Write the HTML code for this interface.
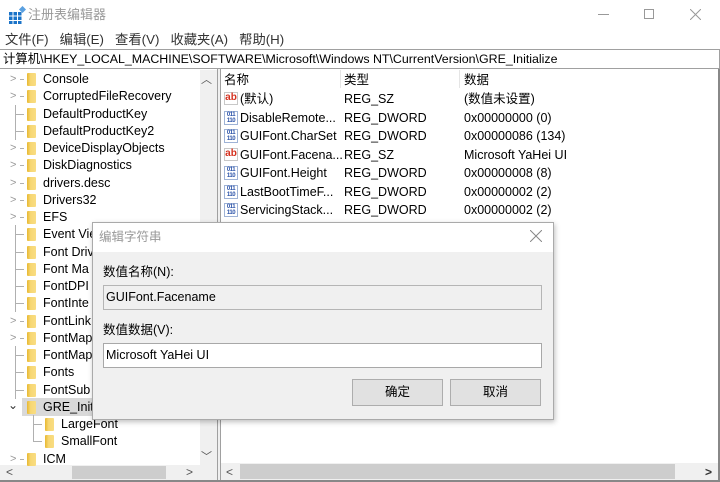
<!DOCTYPE html>
<html><head><meta charset="utf-8"><style>
*{margin:0;padding:0;box-sizing:border-box}
body{width:720px;height:482px;overflow:hidden;background:#fff;font-family:"Liberation Sans","Noto Sans CJK SC",sans-serif;font-size:12.5px;color:#000;position:relative}
.a{position:absolute;white-space:nowrap;line-height:16px}
.f{position:absolute;width:9px;height:13px;background:linear-gradient(90deg,#e8b830,#f7d774 40%,#f9dd82);border-radius:1px}
.ab{position:absolute;width:14px;height:13px;background:#fff;border:1px solid #c8c8c8;color:#d4301e;font-weight:bold;font-size:10px;line-height:10px;text-align:center}
.dw{position:absolute;width:14px;height:14px;background:#fff;border:1px solid #9fb3d6;color:#2a52a8;font-size:6px;line-height:6px;font-weight:bold;text-align:center;letter-spacing:-.5px}
.arr{position:absolute;color:#999;font-size:11px;line-height:16px}
</style></head><body>
<svg class="a" style="left:8px;top:6px" width="18" height="18"><g fill="#1a73c8"><rect x="1" y="6" width="3.5" height="3.5"/><rect x="5.5" y="6" width="3.5" height="3.5"/><rect x="10" y="6" width="3.5" height="3.5"/><rect x="1" y="10.5" width="3.5" height="3.5"/><rect x="5.5" y="10.5" width="3.5" height="3.5"/><rect x="10" y="10.5" width="3.5" height="3.5"/><rect x="1" y="15" width="3.5" height="3"/><rect x="5.5" y="15" width="3.5" height="3"/><rect x="10" y="15" width="3.5" height="3"/></g><rect x="12" y="1" width="5" height="5" fill="#5aa0e0" transform="rotate(45 14.5 3.5)"/></svg>
<div class="a" style="left:28px;top:7px;color:#999;font-size:13px">注册表编辑器</div>
<div class="a" style="left:598px;top:14px;width:11px;height:1px;background:#999"></div>
<div class="a" style="left:644px;top:9px;width:10px;height:10px;border:1px solid #999"></div>
<svg class="a" style="left:690px;top:9px" width="11" height="11"><path d="M0 0L11 11M11 0L0 11" stroke="#999" stroke-width="1"/></svg>
<div class="a" style="left:5px;top:32px;color:#333;font-size:13.3px">文件(F)&nbsp;&nbsp; 编辑(E)&nbsp;&nbsp; 查看(V)&nbsp;&nbsp; 收藏夹(A)&nbsp;&nbsp; 帮助(H)</div>
<div class="a" style="left:0;top:49px;width:720px;height:20px;border-top:1px solid #a0a0a0;border-bottom:1px solid #a0a0a0;border-right:1px solid #a0a0a0"></div>
<div class="a" style="left:3px;top:51px;font-size:12.4px">计算机\HKEY_LOCAL_MACHINE\SOFTWARE\Microsoft\Windows NT\CurrentVersion\GRE_Initialize</div>
<div class="a" style="left:217px;top:69px;width:4px;height:413px;background:#f0f0f0;border-left:1px solid #a0a0a0;border-right:1px solid #a0a0a0"></div>
<div class="a" style="left:718px;top:69px;width:2px;height:413px;background:#888"></div>
<div class="a" style="left:0;top:480px;width:720px;height:2px;background:#888"></div>
<div class="a" style="left:200px;top:70px;width:17px;height:395px;background:#f0f0f0"></div>
<div class="a" style="left:201px;top:72px;color:#555;font-size:11px">︿</div>
<div class="a" style="left:201px;top:449px;color:#555;font-size:11px">﹀</div>
<div class="a" style="left:0;top:465px;width:217px;height:15px;background:#f0f0f0"></div>
<div class="a" style="left:72px;top:466px;width:94px;height:13px;background:#cdcdcd"></div>
<div class="a" style="left:6px;top:464px;color:#555;font-size:12px">&lt;</div>
<div class="a" style="left:186px;top:464px;color:#555;font-size:12px">&gt;</div>
<div class="a" style="left:221px;top:463px;width:497px;height:17px;background:#f0f0f0"></div>
<div class="a" style="left:240px;top:464px;width:435px;height:15px;background:#cdcdcd"></div>
<div class="a" style="left:226px;top:464px;color:#555;font-size:12px">&lt;</div>
<div class="a" style="left:705px;top:464px;color:#333;font-size:12px;font-weight:bold">&gt;</div>
<div class="a" style="left:22px;top:398px;width:70px;height:18px;background:#d9d9d9"></div>
<div class="a" style="left:33px;top:415px;width:1px;height:27px;background:#b0b0b0"></div>
<div class="a" style="left:33px;top:424px;width:9px;height:1px;background:#b0b0b0"></div>
<div class="a" style="left:33px;top:441px;width:9px;height:1px;background:#b0b0b0"></div>
<div id="tree"></div>
<script>
var items=[["Console",1],["CorruptedFileRecovery",1],["DefaultProductKey",0],["DefaultProductKey2",0],["DeviceDisplayObjects",1],["DiskDiagnostics",1],["drivers.desc",1],["Drivers32",1],["EFS",1],["Event Vie",0],["Font Driv",0],["Font Ma",0],["FontDPI",0],["FontInte",0],["FontLink",1],["FontMap",1],["FontMap",0],["Fonts",0],["FontSub",0],["GRE_Init",2],["LargeFont",3],["SmallFont",3],["ICM",1]];
var h="";
items.forEach(function(it,i){var y=71+i*17.25;var c=y+8;
if(it[1]==3){h+='<div class="f" style="left:45px;top:'+(c-6)+'px"></div><div class="a" style="left:61px;top:'+(c-8)+'px">'+it[0]+'</div>';return;}
if(it[1]==1)h+='<div class="arr" style="left:10px;top:'+(c-8)+'px">&gt;</div><div class="a" style="left:20px;top:'+c+'px;width:4px;height:1px;background:#b0b0b0"></div>';
else if(it[1]==2)h+='<div class="arr" style="left:8px;top:'+(c-10)+'px;color:#333;font-size:12px">&#8964;</div>';
else h+='<div class="a" style="left:15px;top:'+c+'px;width:9px;height:1px;background:#b0b0b0"></div><div class="a" style="left:15px;top:'+(y-1)+'px;width:1px;height:18px;background:#b0b0b0"></div>';
h+='<div class="f" style="left:27px;top:'+(c-6)+'px"></div><div class="a" style="left:43px;top:'+(c-8)+'px">'+it[0]+'</div>';});
document.getElementById('tree').innerHTML=h;
</script>
<div class="a" style="left:224px;top:72px">名称</div>
<div class="a" style="left:340px;top:70px;width:1px;height:18px;background:#e5e5e5"></div>
<div class="a" style="left:344px;top:72px">类型</div>
<div class="a" style="left:459px;top:70px;width:1px;height:18px;background:#e5e5e5"></div>
<div class="a" style="left:464px;top:72px">数据</div>
<div id="list"></div>
<script>
var rows=[["ab","(默认)","REG_SZ","(数值未设置)"],["dw","DisableRemote...","REG_DWORD","0x00000000 (0)"],["dw","GUIFont.CharSet","REG_DWORD","0x00000086 (134)"],["ab","GUIFont.Facena...","REG_SZ","Microsoft YaHei UI"],["dw","GUIFont.Height","REG_DWORD","0x00000008 (8)"],["dw","LastBootTimeF...","REG_DWORD","0x00000002 (2)"],["dw","ServicingStack...","REG_DWORD","0x00000002 (2)"]];
var g="";rows.forEach(function(r,i){var y=91+i*18.5;
g+=(r[0]=="ab"?'<div class="ab" style="left:224px;top:'+(y+1)+'px">ab</div>':'<div class="dw" style="left:224px;top:'+(y+1)+'px">011<br>110</div>');
g+='<div class="a" style="left:240px;top:'+y+'px">'+r[1]+'</div><div class="a" style="left:344px;top:'+y+'px">'+r[2]+'</div><div class="a" style="left:464px;top:'+y+'px">'+r[3]+'</div>';});
document.getElementById('list').innerHTML=g;
</script>
<div class="a" style="left:92px;top:222px;width:462px;height:198px;background:#f0f0f0;border:1px solid #aaa;box-shadow:1px 2px 5px rgba(0,0,0,.25)"></div>
<div class="a" style="left:93px;top:223px;width:460px;height:29px;background:#fff"></div>
<div class="a" style="left:99px;top:229px;color:#999;font-size:12.5px">编辑字符串</div>
<svg class="a" style="left:530px;top:230px" width="12" height="12"><path d="M0 0L12 12M12 0L0 12" stroke="#888" stroke-width="1"/></svg>
<div class="a" style="left:103px;top:264px">数值名称(N):</div>
<div class="a" style="left:103px;top:285px;width:439px;height:25px;background:#f0f0f0;border:1px solid #b5b5b5"></div>
<div class="a" style="left:106px;top:289px">GUIFont.Facename</div>
<div class="a" style="left:103px;top:322px">数值数据(V):</div>
<div class="a" style="left:103px;top:343px;width:439px;height:25px;background:#fff;border:1px solid #a8a8a8"></div>
<div class="a" style="left:106px;top:347px">Microsoft YaHei UI</div>
<div class="a" style="left:352px;top:379px;width:91px;height:27px;background:#e1e1e1;border:1px solid #adadad;text-align:center;line-height:25px">确定</div>
<div class="a" style="left:450px;top:379px;width:91px;height:27px;background:#e1e1e1;border:1px solid #adadad;text-align:center;line-height:25px">取消</div>
</body></html>
